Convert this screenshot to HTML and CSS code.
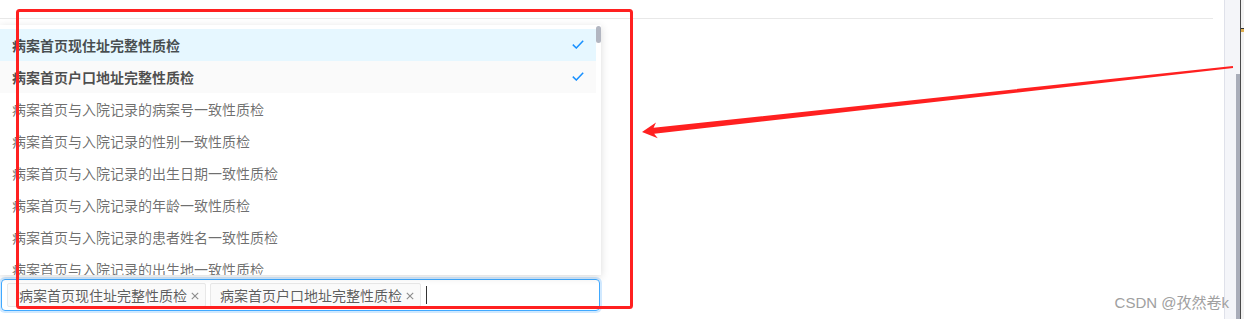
FILE: index.html
```html
<!DOCTYPE html>
<html lang="zh-CN">
    <head>
        <meta charset="utf-8" />
        <title>质检规则选择</title>
        <link rel="stylesheet" href="styles.css">
    </head>
    <body>
        <div class="screen">
            <div class="page">
                <div class="head-line"></div>
                <div class="form">
                    <div class="select">
                        <div class="dropdown">
                            <ul class="menu">
                                <li class="item active selected">病案首页现住址完整性质检<svg class="check" width="12" height="9" viewBox="0 0 12 9"><path d="M0.8 4.6 L4.3 8 L11.2 0.8" /></svg></li>
                                <li class="item selected">病案首页户口地址完整性质检<svg class="check" width="12" height="9" viewBox="0 0 12 9"><path d="M0.8 4.6 L4.3 8 L11.2 0.8" /></svg></li>
                                <li class="item">病案首页与入院记录的病案号一致性质检</li>
                                <li class="item">病案首页与入院记录的性别一致性质检</li>
                                <li class="item">病案首页与入院记录的出生日期一致性质检</li>
                                <li class="item">病案首页与入院记录的年龄一致性质检</li>
                                <li class="item">病案首页与入院记录的患者姓名一致性质检</li>
                                <li class="item">病案首页与入院记录的出生地一致性质检</li>
                            </ul>
                            <div class="menu-bar"><div class="menu-thumb"></div></div>
                        </div>
                        <div class="selection">
                            <span class="tag">病案首页现住址完整性质检<svg class="close" width="8" height="8" viewBox="0 0 8 8"><path d="M0.8 0.8 L7.2 7.2 M7.2 0.8 L0.8 7.2" /></svg></span>
                            <span class="tag">病案首页户口地址完整性质检<svg class="close" width="8" height="8" viewBox="0 0 8 8"><path d="M0.8 0.8 L7.2 7.2 M7.2 0.8 L0.8 7.2" /></svg></span>
                            <span class="cursor"></span>
                        </div>
                    </div>
                </div>
            </div>
            <div class="scrollbar"><div class="thumb"></div></div>
            <div class="edge"><span class="edge-mark"></span></div>
            <div class="watermark">CSDN @孜然卷k</div>
            <svg class="markup" width="1244" height="319" viewBox="0 0 1244 319">
                <rect x="17.5" y="10.5" width="614" height="297" rx="2" fill="none" stroke="#ff2020" stroke-width="3" />
                <polygon fill="#ff2020" points="642,132 656,122.4 653.6,127.7 1232.9,66 1233.1,68 654.2,133.7 657.8,138.3" />
            </svg>
        </div>
    </body>
</html>
```

FILE: styles.css
```css
* { margin: 0; padding: 0; box-sizing: border-box; }
body { background: #fff; font: 14px/1.5 "Noto Sans CJK SC", "Noto Sans", sans-serif; color: rgba(0,0,0,.65); overflow: hidden; }
ul { list-style: none; }

.screen { position: relative; display: flex; width: 1244px; height: 319px; overflow: hidden; }
.page { flex: 1; position: relative; }
.head-line { height: 19px; margin-right: 11px; border-bottom: 1px solid #e8e8e8; }

.form { padding-top: 260px; padding-left: 1px; }
.select { position: relative; width: 599px; }

/* dropdown opens upward */
.dropdown { position: absolute; left: -1px; bottom: calc(100% + 4px); width: 601px; height: 250px; display: flex; background: #fff; box-shadow: 0 2px 8px rgba(0,0,0,.15); overflow: hidden; }
.menu { flex: 1; padding-top: 4px; }
.item { position: relative; height: 32px; padding: 0 12px; line-height: 32px; white-space: nowrap; color: rgba(0,0,0,.58); }
.item.selected { font-weight: 600; background: #fafafa; color: rgba(0,0,0,.7); }
.item.active { background: #e6f7ff; }
.check { position: absolute; right: 12px; top: 11px; }
.check path { fill: none; stroke: #1890ff; stroke-width: 1.5; }
.menu-bar { width: 5px; padding-top: 1px; }
.menu-thumb { height: 17px; border-radius: 3px; background: #b2b6c1; }

.selection { display: flex; align-items: center; height: 32px; padding-left: 5px; border: 1px solid #40a9ff; border-radius: 4px; box-shadow: 0 0 0 2px rgba(24,144,255,.2); }
.tag { display: flex; align-items: center; height: 24px; margin-right: 4px; padding: 0 6px 0 11px; border: 1px solid #e8e8e8; border-radius: 2px; background: #fafafa; line-height: 22px; white-space: nowrap; }
.tag + .tag { padding-left: 9px; }
.close { margin-left: 4px; margin-top: 1px; }
.close path { fill: none; stroke: #8c8c8c; stroke-width: 1.1; }
.cursor { width: 1px; height: 18px; margin-left: 1px; background: #333; }

.scrollbar { width: 16px; padding-left: 11px; padding-top: 74px; border-left: 1px solid #dfe1ea; background: #f4f5f9; }
.thumb { height: 100%; background: #a9adb9; }
.edge { position: relative; width: 4px; border-left: 1px solid #4a4a4a; background: #f2f2f2; }
.edge-mark { position: absolute; left: 0; top: 28px; width: 3px; height: 4px; background: #e0b050; border-top: 1px solid #333; }

.watermark { position: absolute; right: 15px; bottom: 9px; font: 15px/1 "Liberation Sans", "Noto Sans CJK SC", sans-serif; color: #a0a0a0; text-shadow: 0 0 1px #fff; }

.markup { position: absolute; left: 0; top: 0; pointer-events: none; }
```
